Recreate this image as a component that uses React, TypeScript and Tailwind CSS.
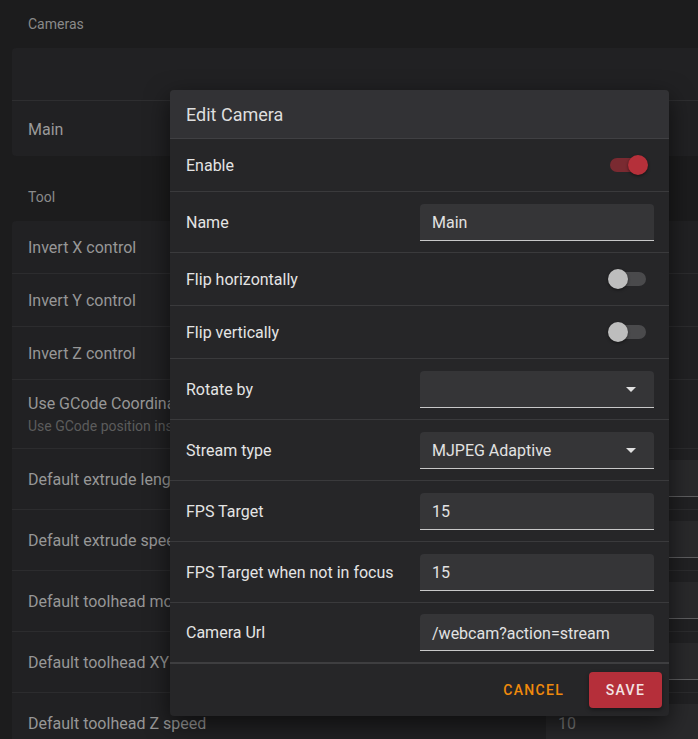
import React from "react";

const bgRows: { label: string; sub?: string; h: string; value?: string; field?: boolean }[] = [
  { label: "Invert X control", h: "h-[53px]" },
  { label: "Invert Y control", h: "h-[53px]" },
  { label: "Invert Z control", h: "h-[53px]" },
  { label: "Use GCode Coordinates", sub: "Use GCode position instead of toolhead position", h: "h-[69px]" },
  { label: "Default extrude length", h: "h-[61px]", field: true },
  { label: "Default extrude speed", h: "h-[61px]", field: true },
  { label: "Default toolhead move length", h: "h-[61px]", field: true },
  { label: "Default toolhead XY speed", h: "h-[61px]", field: true },
  { label: "Default toolhead Z speed", h: "h-[61px]", field: true, value: "10" },
];

const Toggle: React.FC<{ on?: boolean }> = ({ on }) => (
  <div className="relative w-[40px] h-5 flex items-center">
    <div
      className={
        on
          ? "absolute left-[2px] w-[36px] h-[14px] rounded-full bg-[#7a2a31]"
          : "absolute left-[2px] w-[36px] h-[14px] rounded-full bg-[#4a4a4c]"
      }
    />
    <div
      className={
        on
          ? "absolute left-[20px] w-5 h-5 rounded-full bg-[#b5303a] shadow-[0_1px_3px_rgba(0,0,0,0.5)]"
          : "absolute left-0 w-5 h-5 rounded-full bg-[#bdbdbd] shadow-[0_1px_3px_rgba(0,0,0,0.5)]"
      }
    />
  </div>
);

const Field: React.FC<{ value?: string; select?: boolean }> = ({ value, select }) => (
  <div className="w-[234px] h-[37px] bg-[#353537] rounded-t border-b border-[#c8c8c8] flex items-center px-3 text-[16px] text-[#e2e2e2]">
    <span className="flex-1 pt-[3px]">{value}</span>
    {select && (
      <svg width="10" height="5" viewBox="0 0 10 5" className="mr-[6px] mt-[2px]">
        <path d="M0 0 L10 0 L5 5 Z" fill="#e0e0e0" />
      </svg>
    )}
  </div>
);

const Row: React.FC<{ label: string; h: string; children?: React.ReactNode; border?: string }> = ({
  label,
  h,
  children,
  border = "border-b border-[#3a3a3c]",
}) => (
  <div className={`${h} ${border} flex items-center justify-between pl-4`}>
    <span className="text-[16px] text-[#e4e4e4] pt-[1px]">{label}</span>
    {children}
  </div>
);

export default function App() {
  return (
    <div
      className="relative w-[698px] h-[739px] overflow-hidden bg-[#1c1c1d]"
      style={{ fontFamily: "Roboto, 'Liberation Sans', sans-serif" }}
    >
      {/* page behind the dialog */}
      <div className="pl-3">
        <div className="h-12 flex items-center pl-4 pt-[1px] text-[14px] text-[#8a8a8a]">Cameras</div>
        <div className="w-[720px] rounded bg-[#212123]">
          <div className="h-[53px] border-b border-[#2e2e30]" />
          <div className="h-[55px] flex items-center pl-4 pt-[2px] text-[16px] text-[#9a9a9a]">Main</div>
        </div>
        <div className="h-[65px] pt-[32px] pl-4 text-[14px] leading-[18px] text-[#8a8a8a]">Tool</div>
        <div className="w-[720px] rounded-t bg-[#212123]">
          {bgRows.map((r) => (
            <div key={r.label} className={`${r.h} border-b border-[#2c2c2e] flex items-center`}>
              <div className="flex-1 pl-4 pt-[1px] flex flex-col">
                <span className="text-[16px] text-[#979797]">{r.label}</span>
                {r.sub && <span className="text-[14px] text-[#5c5c5c]">{r.sub}</span>}
              </div>
              {r.field && (
                <div className="w-[186px] h-[37px] mb-[1px] bg-[#29292b] rounded-t border-b border-[#5e5e60] flex items-center px-3 pt-[3px] text-[16px] text-[#7c7c7c]">
                  {r.value}
                </div>
              )}
            </div>
          ))}
        </div>
      </div>

      {/* dialog */}
      <div className="absolute left-[170px] top-[90px] w-[499px] rounded bg-[#262628] shadow-[0_8px_24px_rgba(0,0,0,0.6)] overflow-hidden">
        <div className="h-[49px] bg-[#323235] border-b border-[#404043] flex items-center pl-4 text-[18px] text-[#dedede]">
          Edit Camera
        </div>
        <Row label="Enable" h="h-[53px]">
          <div className="mr-[21px]">
            <Toggle on />
          </div>
        </Row>
        <Row label="Name" h="h-[61px]">
          <div className="mr-[15px]">
            <Field value="Main" />
          </div>
        </Row>
        <Row label="Flip horizontally" h="h-[53px]">
          <div className="mr-[21px]">
            <Toggle />
          </div>
        </Row>
        <Row label="Flip vertically" h="h-[53px]">
          <div className="mr-[21px]">
            <Toggle />
          </div>
        </Row>
        <Row label="Rotate by" h="h-[61px]">
          <div className="mr-[15px]">
            <Field select />
          </div>
        </Row>
        <Row label="Stream type" h="h-[61px]">
          <div className="mr-[15px]">
            <Field value="MJPEG Adaptive" select />
          </div>
        </Row>
        <Row label="FPS Target" h="h-[61px]">
          <div className="mr-[15px]">
            <Field value="15" />
          </div>
        </Row>
        <Row label="FPS Target when not in focus" h="h-[61px]">
          <div className="mr-[15px]">
            <Field value="15" />
          </div>
        </Row>
        <Row label="Camera Url" h="h-[61px]" border="border-b-2 border-[#3e3e40]">
          <div className="mr-[15px]">
            <Field value="/webcam?action=stream" />
          </div>
        </Row>
        <div className="h-[52px] flex items-center justify-end pr-[7px] gap-[9px]">
          <button className="h-9 px-4 text-[14px] font-medium tracking-[1.3px] text-[#f08a0c]">CANCEL</button>
          <button className="h-9 w-[73px] rounded bg-[#b52f3a] text-[14px] font-medium tracking-[1.3px] text-[#f3e3e4] shadow-[0_2px_4px_rgba(0,0,0,0.4)]">
            SAVE
          </button>
        </div>
      </div>
    </div>
  );
}
